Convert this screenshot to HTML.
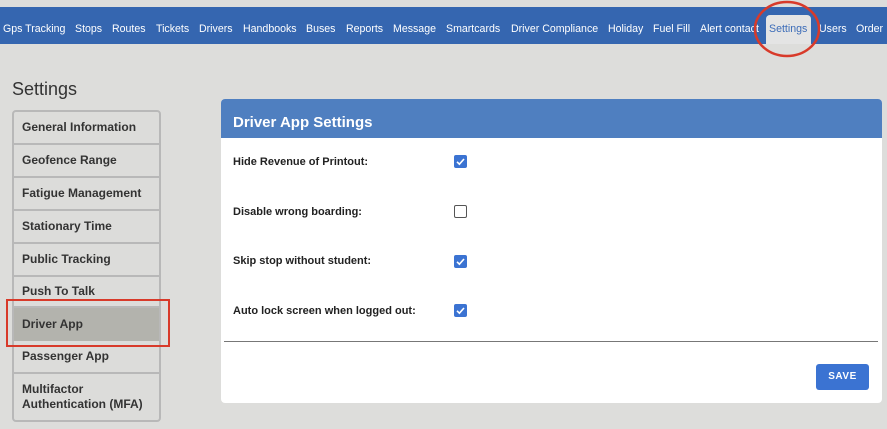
<!DOCTYPE html><html><head><style>
*{margin:0;padding:0;box-sizing:border-box}
body{width:887px;height:429px;background:#dddddb;font-family:"Liberation Sans",sans-serif;position:relative;overflow:hidden}
.nav{position:absolute;top:7px;left:0;width:887px;height:37px;background:#3566b0}
.nav span{position:absolute;top:16px;color:#fff;font-size:10.6px;white-space:nowrap}
.set{position:absolute;left:766px;top:8px;width:45px;height:29px;background:#e4e4e4;border-radius:4px 4px 0 0}
h1{position:absolute;left:12px;top:79px;font-size:18px;font-weight:normal;color:#333}
.side{position:absolute;left:12px;top:110px;width:149px;height:312px;border:2px solid #b8b8b8;border-radius:4px;background:#dcdcda}
.it{position:absolute;left:0;width:145px;border-bottom:2px solid #b8b8b8;font-size:12px;font-weight:bold;color:#333;padding-left:8px;display:flex;align-items:center;line-height:15px}
.panel{position:absolute;left:221px;top:99px;width:661px;height:304px;background:#fff;border-radius:4px;overflow:hidden}
.ph{height:39px;background:#4f7fc0;color:#fff;font-size:15px;font-weight:bold;padding:15px 0 0 12px}
.row{position:absolute;left:12px;font-size:11px;font-weight:bold;color:#222}
.cb{position:absolute;left:233px;width:13px;height:13px;border-radius:2px}
.on{background:#3b73d2}
.off{border:1.5px solid #555;background:#fff}
</style></head><body>
<div class="nav">
<div class="set"></div>
<span style="left:3px">Gps Tracking</span><span style="left:75px">Stops</span><span style="left:112px">Routes</span><span style="left:156px">Tickets</span><span style="left:199px">Drivers</span><span style="left:243px">Handbooks</span><span style="left:306px">Buses</span><span style="left:346px">Reports</span><span style="left:393px">Message</span><span style="left:446px">Smartcards</span><span style="left:511px">Driver Compliance</span><span style="left:608px">Holiday</span><span style="left:653px">Fuel Fill</span><span style="left:700px">Alert contact</span><span style="left:769px;color:#3c6cb8">Settings</span><span style="left:819px">Users</span><span style="left:856px">Order</span>
</div>
<svg style="position:absolute;left:750px;top:0" width="75" height="60"><ellipse cx="37" cy="29" rx="32" ry="27" fill="none" stroke="#d83a2a" stroke-width="2.5"/></svg>
<h1>Settings</h1>
<div class="side">
<div class="it" style="top:0;height:33px">General Information</div>
<div class="it" style="top:33px;height:33px">Geofence Range</div>
<div class="it" style="top:66px;height:33px">Fatigue Management</div>
<div class="it" style="top:99px;height:33px">Stationary Time</div>
<div class="it" style="top:132px;height:33px">Public Tracking</div>
<div class="it" style="top:165px;height:31px">Push To Talk</div>
<div class="it" style="top:196px;height:33px;background:#b3b3ad;border-bottom:none">Driver App</div>
<div class="it" style="top:229px;height:33px">Passenger App</div>
<div class="it" style="top:262px;height:46px;border:none">Multifactor<br>Authentication (MFA)</div>
</div>
<div style="position:absolute;left:6px;top:299px;width:164px;height:48px;border:2.5px solid #d83a2a"></div>
<div class="panel">
<div class="ph">Driver App Settings</div>
<div class="row" style="top:57px">Hide Revenue of Printout:</div>
<div class="row" style="top:107px">Disable wrong boarding:</div>
<div class="row" style="top:156px">Skip stop without student:</div>
<div class="row" style="top:206px">Auto lock screen when logged out:</div>
<svg class="cb on" style="top:56px" viewBox="0 0 13 13"><path d="M3 6.8l2.4 2.4L10 4" stroke="#fff" stroke-width="1.6" fill="none"/></svg>
<div class="cb off" style="top:106px"></div>
<svg class="cb on" style="top:156px" viewBox="0 0 13 13"><path d="M3 6.8l2.4 2.4L10 4" stroke="#fff" stroke-width="1.6" fill="none"/></svg>
<svg class="cb on" style="top:205px" viewBox="0 0 13 13"><path d="M3 6.8l2.4 2.4L10 4" stroke="#fff" stroke-width="1.6" fill="none"/></svg>
<div style="position:absolute;left:3px;top:242px;width:654px;height:1px;background:#777"></div>
<div style="position:absolute;left:595px;top:265px;width:53px;height:26px;background:#3b73d2;border-radius:3px;color:#fff;font-size:10px;font-weight:bold;text-align:center;line-height:26px;letter-spacing:.5px">SAVE</div>
</div>
</body></html>
